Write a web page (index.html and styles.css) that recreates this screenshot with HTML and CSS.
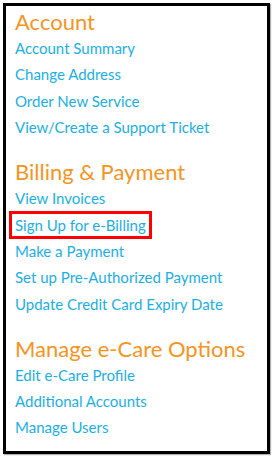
FILE: index.html
```html
<!DOCTYPE html>
<html lang="en">
<head>
    <meta charset="UTF-8">
    <meta name="viewport" content="width=device-width, initial-scale=1.0">
    <title>My Account</title>
    <link rel="stylesheet" href="styles.css">
</head>
<body>
    <div class="panel">
        <div class="section">
            <h2>Account</h2>
            <ul>
                <li><a href="#">Account Summary</a></li>
                <li><a href="#">Change Address</a></li>
                <li><a href="#">Order New Service</a></li>
                <li><a href="#">View/Create a Support Ticket</a></li>
            </ul>
        </div>

        <div class="section">
            <h2>Billing &amp; Payment</h2>
            <ul>
                <li><a href="#">View Invoices</a></li>
                <li><a href="#" class="highlight">Sign Up for e-Billing</a></li>
                <li><a href="#">Make a Payment</a></li>
                <li><a href="#">Set up Pre-Authorized Payment</a></li>
                <li><a href="#">Update Credit Card Expiry Date</a></li>
            </ul>
        </div>

        <div class="section">
            <h2>Manage e-Care Options</h2>
            <ul>
                <li><a href="#">Edit e-Care Profile</a></li>
                <li><a href="#">Additional Accounts</a></li>
                <li><a href="#">Manage Users</a></li>
            </ul>
        </div>
    </div>
</body>
</html>
```

FILE: styles.css
```css
body {
    margin: 0;
    font-family: Lato, "Open Sans", sans-serif;
    background: #fff;
}
.panel {
    margin: 3px;
    height: 451px;
    box-sizing: border-box;
    border: 3px solid #000;
    padding: 2px 0 0 9px;
    box-shadow: 1px 1px 1px rgba(0, 0, 0, 0.3);
}
.section {
    margin-bottom: 17.5px;
}
h2 {
    margin: 0;
    font-size: 22px;
    line-height: 27px;
    font-weight: normal;
    color: #f7941d;
}
ul {
    list-style: none;
    margin: 0;
    padding: 0;
}
li {
    font-size: 15px;
    line-height: 26.4px;
}
a {
    color: #1aafe6;
    text-decoration: none;
}
.highlight {
    border: 3px solid #f00;
    padding: 2px 3px;
    margin-left: -6px;
}
```
